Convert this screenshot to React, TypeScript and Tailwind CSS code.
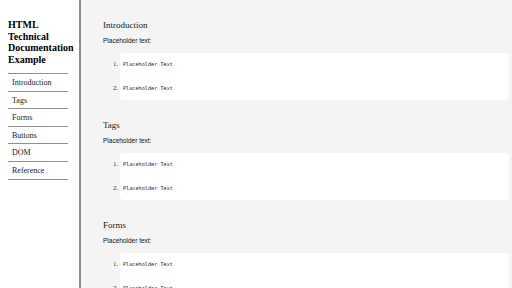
import React from "react";

const sections = ["Introduction", "Tags", "Forms", "Buttons", "DOM", "Reference"];

export default function App() {
  return (
    <div className="flex w-[512px] h-[288px] overflow-hidden bg-[#f4f4f4] font-['Liberation_Serif',serif] text-black">
      <nav className="w-[81px] shrink-0 h-full bg-white border-r-2 border-[#8c8c8c] pt-[19px] pl-[8px]">
        <h1 className="text-[10px] leading-[11.5px] font-bold">
          HTML
          <br />
          Technical
          <br />
          Documentation
          <br />
          Example
        </h1>
        <ul className="mt-[8px] w-[60px] border-b-[1.5px] border-[#8f8f8f]">
          {sections.map((s) => (
            <li
              key={s}
              className="h-[17.6px] border-t-[1.5px] border-[#8f8f8f] pl-[4px] text-[8px] leading-[17px] text-[#222]"
            >
              {s}
            </li>
          ))}
        </ul>
      </nav>
      <main className="flex-1 pl-[22px] pr-[3px] pt-[20px]">
        {sections.map((s) => (
          <section key={s} className="mb-[20px]">
            <h2 className="text-[9px] leading-[10px] text-[#222]">{s}</h2>
            <p className="mt-[7px] text-[6.5px] leading-[8px] font-['Liberation_Sans',sans-serif] text-[#111]">
              Placeholder text:
            </p>
            <ol className="mt-[8px] ml-[17px] list-decimal list-outside bg-white rounded-[4px] text-[7px] marker:text-[#333]">
              <li className="h-[23.5px] leading-[23.5px] pl-[3px]">
                <code className="font-['DejaVu_Sans_Mono',monospace] text-[5.2px] text-[#222]">Placeholder Text</code>
              </li>
              <li className="h-[23.5px] leading-[23.5px] pl-[3px]">
                <code className="font-['DejaVu_Sans_Mono',monospace] text-[5.2px] text-[#222]">Placeholder Text</code>
              </li>
            </ol>
          </section>
        ))}
      </main>
    </div>
  );
}
